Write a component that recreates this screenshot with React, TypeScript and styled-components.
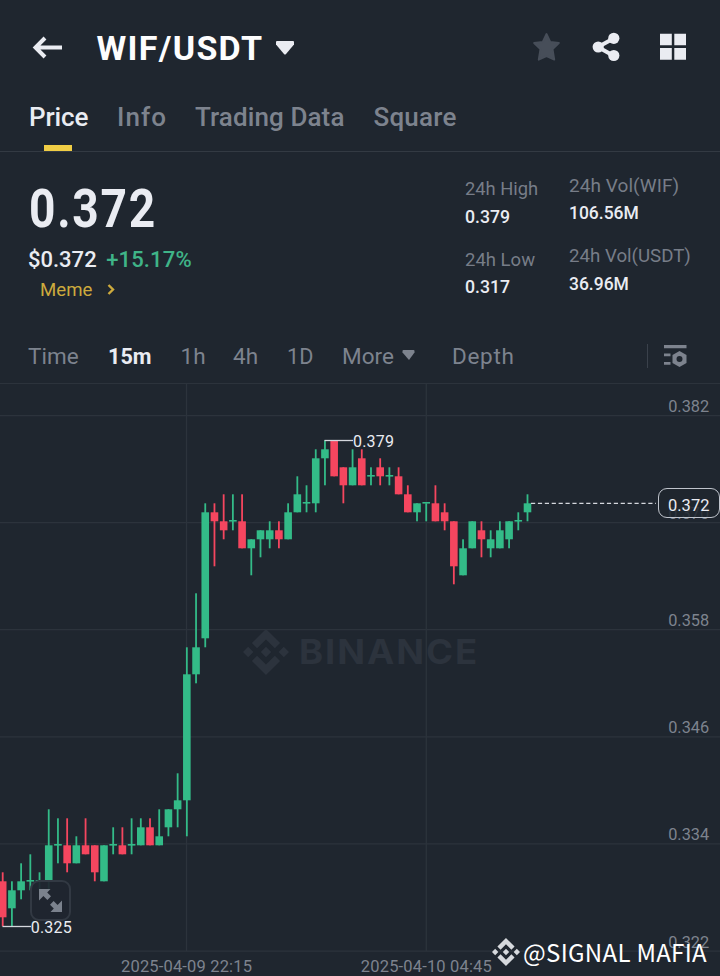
import React from 'react';
import styled, { createGlobalStyle } from 'styled-components';

const color = {
  bg: '#1f262f',
  line: '#2c333c',
  text: '#eaecf2',
  muted: '#7d838e',
  up: '#33bb88',
  down: '#f5465f',
  gold: '#f0cd45',
};

const GlobalStyle = createGlobalStyle`
  * { box-sizing: border-box; }
  body { margin: 0; background: ${color.bg}; font-family: Roboto, "Liberation Sans", sans-serif; }
`;

const Screen = styled.main`
  display: flex;
  flex-direction: column;
  width: 720px;
  height: 976px;
  overflow: hidden;
  background: ${color.bg};
  color: ${color.text};
`;

const Icon = styled.svg`
  display: block;
  flex: none;
`;

/* Label whose tracking and glyph width can be tuned without changing the flow. */
const Label = styled.span<{ $ls?: number; $sx?: number }>`
  display: inline-block;
  white-space: pre;
  letter-spacing: ${(p) => p.$ls ?? 0}px;
  transform: scaleX(${(p) => p.$sx ?? 1});
  transform-origin: left center;
`;

const Header = styled.header`
  display: flex;
  align-items: center;
  height: 95px;
  padding: 0 33px 0 32px;
`;

const PairButton = styled.h1`
  display: flex;
  align-items: center;
  gap: 13px;
  margin: 1px 0 0 33.5px;
  font-size: 34px;
  font-weight: 700;
  line-height: 40px;
  color: #fdfdfe;
`;

const Actions = styled.div`
  display: flex;
  align-items: center;
  gap: 30px;
  margin: -1px 0 0 auto;
`;

const TabBar = styled.nav`
  display: flex;
  height: 57px;
  padding: 1px 0 14px 29px;
  border-bottom: 1px solid #333a43;
`;

const Tab = styled.a<{ $active?: boolean; $width: number }>`
  position: relative;
  width: ${(p) => p.$width}px;
  font-size: 26px;
  font-weight: 500;
  line-height: 42px;
  color: ${(p) => (p.$active ? color.text : color.muted)};
  &::after {
    content: '';
    display: ${(p) => (p.$active ? 'block' : 'none')};
    position: absolute;
    left: 15px;
    top: 49px;
    width: 28px;
    height: 6px;
    background: ${color.gold};
  }
`;

const Ticker = styled.section`
  display: flex;
  height: 176px;
  padding-left: 29px;
`;

const PriceColumn = styled.div`
  width: 436px;
  padding-top: 27px;
`;

const LastPrice = styled.div`
  font-size: 53px;
  font-weight: 700;
  line-height: 60px;
`;

const FiatRow = styled.div`
  display: flex;
  gap: 9.5px;
  margin: 8px 0 0 -1px;
  font-size: 22px;
  font-weight: 500;
  line-height: 26px;
`;

const Change = styled.span`
  letter-spacing: 0.15px;
  color: #3fb488;
`;

const Category = styled.a`
  display: flex;
  align-items: center;
  gap: 13px;
  margin: 4px 0 0 11px;
  font-size: 19px;
  line-height: 26px;
  color: #cdaa3d;
`;

const StatColumn = styled.dl<{ $top: number; $width: number }>`
  display: flex;
  flex-direction: column;
  gap: 15px;
  width: ${(p) => p.$width}px;
  margin: 0;
  padding-top: ${(p) => p.$top}px;
  font-size: 19px;
  line-height: 28px;
`;

const Stat = styled.div`
  height: 55.5px;
`;

const StatName = styled.dt`
  height: 27.5px;
  color: #777d88;
`;

const StatValue = styled.dd`
  margin: 0;
  font-weight: 500;
`;

const IntervalBar = styled.nav`
  display: flex;
  align-items: center;
  height: 56px;
  padding-left: 28px;
  border-bottom: 1px solid ${color.line};
`;

const Interval = styled.a<{ $active?: boolean; $width: number }>`
  display: flex;
  align-items: center;
  width: ${(p) => p.$width}px;
  font-size: 22.5px;
  font-weight: ${(p) => (p.$active ? 700 : 400)};
  line-height: 28px;
  color: ${(p) => (p.$active ? color.text : color.muted)};
`;

const Divider = styled.span`
  width: 1px;
  height: 24px;
  background: #3a414b;
`;

const ChartPanel = styled.section`
  position: relative;
  width: 720px;
  height: 592px;
`;

const ChartSvg = styled.svg`
  display: block;
`;

const CandleLayer = styled.svg`
  position: absolute;
  left: 0;
  top: 0;
`;

const PriceTag = styled.div`
  position: absolute;
  left: 658px;
  top: 104px;
  width: 61.5px;
  height: 30px;
  padding-left: 9px;
  border: 1.5px solid #bfc4cc;
  border-radius: 9px;
  background: rgba(31, 38, 47, 0.86);
  font-size: 17px;
  line-height: 33px;
`;

const ExpandButton = styled.button`
  position: absolute;
  left: 30px;
  top: 496px;
  display: grid;
  place-items: center;
  width: 41px;
  height: 41px;
  padding: 0;
  border: 2px solid #323943;
  border-radius: 9px;
  background: rgba(31, 38, 47, 0.93);
`;

const Brand = styled.div`
  position: absolute;
  left: 243px;
  top: 245px;
  display: flex;
  align-items: center;
  gap: 9.5px;
  height: 46px;
  color: #2c333d;
  font-family: Inter, sans-serif;
  font-size: 34.5px;
  font-weight: 700;
  line-height: 48px;
`;

const Signature = styled.div`
  position: absolute;
  left: 492px;
  top: 549.5px;
  display: flex;
  align-items: center;
  gap: 3px;
  height: 36px;
  color: #fff;
  font-family: "Noto Sans CJK SC", "Noto Sans", sans-serif;
  font-size: 24px;
  font-weight: 400;
  line-height: 35px;
`;

const BINANCE_MARK =
  'M16.624 13.9202l2.7175 2.7154-7.353 7.353-7.353-7.352 2.7175-2.7164 4.6355 4.6595 4.6356-4.6595zm4.6366-4.6366L24 12l-2.7154 2.7164L18.5682 12l2.6924-2.7164zm-9.272.001l2.7163 2.6914-2.7164 2.7174v-.001L9.2721 12l2.7164-2.7154zm-9.2722-.001L5.4088 12l-2.6914 2.6924L0 12l2.7164-2.7164zM11.9885.0115l7.353 7.329-2.7174 2.7154-4.6356-4.6356-4.6355 4.6595-2.7174-2.7154 7.353-7.353z';

const BinanceMark = ({ size, fill }: { size: number; fill: string }) => (
  <Icon width={size} height={size} viewBox="0 0 24 24">
    <path d={BINANCE_MARK} fill={fill} />
  </Icon>
);

const Caret = ({ width, height, fill }: { width: number; height: number; fill: string }) => (
  <Icon width={width} height={height} viewBox="0 0 18 14">
    <path d="M1 0h16q1 0 1 1v2.5L9.8 13.2q-.8.8-1.6 0L0 3.5V1q0-1 1-1z" fill={fill} />
  </Icon>
);

/* Candles in ticks of 0.001 below the 0.379 high: [rising, high, body top, body bottom, low] */
type Candle = [boolean, number, number, number, number];
const U = true;
const D = false;
const candles: Candle[] = [
  [D, 48, 49, 53, 54], [U, 49, 50, 52, 54], [U, 47, 49, 50, 51], [U, 46, 49, 49, 50], [U, 48, 49, 49, 50],
  [U, 41, 45, 49, 50], [U, 42, 45, 45, 47], [D, 42, 45, 47, 48], [U, 44, 45, 47, 47], [D, 42, 45, 46, 46],
  [D, 45, 45, 48, 49], [U, 45, 45, 49, 49], [U, 43, 45, 45, 46], [D, 43, 45, 46, 46], [U, 42, 45, 45, 46],
  [U, 42, 43, 45, 45], [D, 42, 43, 45, 45], [U, 41, 44, 45, 45], [U, 41, 41, 43, 44], [U, 37, 40, 41, 43],
  [U, 23, 26, 40, 44], [U, 17, 23, 26, 27], [U, 7, 8, 22, 23], [D, 7, 8, 9, 14], [D, 6, 9, 10, 11],
  [U, 6, 9, 9, 10], [D, 6, 9, 12, 12], [U, 11, 11, 12, 15], [U, 10, 10, 11, 13], [U, 9, 10, 11, 12],
  [D, 9, 10, 11, 12], [U, 7, 8, 11, 11], [U, 4, 6, 8, 8], [U, 5, 7, 7, 8], [U, 1, 2, 7, 8],
  [U, 0, 1, 2, 5], [D, 0, 0, 4, 4], [D, 3, 3, 5, 7], [U, 1, 3, 5, 5], [D, 1, 2, 5, 5],
  [U, 3, 4, 4, 5], [D, 2, 3, 4, 5], [U, 3, 4, 4, 5], [D, 3, 4, 6, 6], [D, 5, 6, 8, 8],
  [U, 7, 7, 8, 9], [U, 7, 7, 7, 9], [D, 5, 7, 9, 9], [D, 7, 8, 9, 10], [D, 9, 9, 14, 16],
  [U, 11, 12, 15, 15], [U, 9, 9, 12, 12], [D, 9, 10, 11, 13], [U, 10, 11, 12, 13], [U, 9, 10, 12, 12],
  [U, 9, 9, 11, 12], [U, 8, 9, 9, 10], [U, 6, 7, 8, 9],
];

const STEP = 9.207;
const levelY = (n: number) => 56.3 + n * 9;

const CandleShape = ({ candle, index }: { candle: Candle; index: number }) => {
  const [rising, high, top, bottom, low] = candle;
  const x = 2.7 + index * STEP;
  const doji = top === bottom;
  return (
    <g fill={rising ? color.up : color.down}>
      <rect x={x - 0.9} y={levelY(high)} width={1.8} height={(low - high) * 9} />
      <rect x={x - 3.8} y={doji ? levelY(top) - 1.3 : levelY(top)} width={7.6} height={doji ? 1.6 : (bottom - top) * 9} />
    </g>
  );
};

const priceLevels = [
  ['0.382', 31.7], ['0.370', 138.7], ['0.358', 245.7], ['0.346', 352.9], ['0.334', 459.9], ['0.322', 567.2],
] as const;

const timeMarks = [
  ['2025-04-09 22:15', 186.5], ['2025-04-10 04:45', 426.3],
] as const;

const Grid = () => (
  <ChartSvg width="720" height="592" viewBox="0 0 720 592">
    <g stroke={color.line} strokeWidth="1.3">
      {priceLevels.map(([p, y]) => <line key={p} x1="0" x2="720" y1={y} y2={y} />)}
      {timeMarks.map(([t, x]) => <line key={t} x1={x} x2={x} y1="0" y2="567" />)}
    </g>
    <g fill={color.muted} fontSize="16.5">
      {priceLevels.map(([p, y]) => (
        <text key={p} x="668.2" y={y - 3.6} textLength="41" lengthAdjust="spacingAndGlyphs">{p}</text>
      ))}
      {timeMarks.map(([t, x]) => (
        <text key={t} x={x - 65.5} y="588" textLength="131">{t}</text>
      ))}
    </g>
  </ChartSvg>
);

const Candles = () => (
  <CandleLayer width="720" height="592" viewBox="0 0 720 592">
    {candles.map((c, i) => <CandleShape key={i} candle={c} index={i} />)}
    <g stroke="#d5d8de" strokeWidth="1.3">
      <line x1="324.5" x2="353" y1="56.5" y2="56.5" />
      <line x1="2.5" x2="31" y1="542.5" y2="542.5" />
      <line x1="531" x2="656" y1="119.4" y2="119.4" strokeDasharray="4.2 2.7" />
    </g>
    <g fill={color.text} fontSize="16">
      <text x="353" y="63" textLength="41">0.379</text>
      <text x="30.7" y="549" textLength="41">0.325</text>
    </g>
  </CandleLayer>
);

const tabs: [string, number, number][] = [
  ['Price', 88, -0.1], ['Info', 78, 1.1], ['Trading Data', 178.5, 0.1], ['Square', 90, 0.2],
];

export default function App() {
  return (
    <Screen>
      <GlobalStyle />
      <Header>
        <Icon width="31" height="24" viewBox="0 0 31 24">
          <path d="M13 2L3.5 11.5 13 21M3.5 11.5H30" fill="none" stroke={color.text} strokeWidth="4" />
        </Icon>
        <PairButton>
          <Label $ls={1.3}>WIF/USDT</Label>
          <Caret width={18} height={14} fill={color.text} />
        </PairButton>
        <Actions>
          <Icon width="30" height="32" viewBox="0 0 30 32">
            <path
              d="M15.5 3l3.8 8 8.6 1-6.3 6.2 1.7 10.5-7.8-3.6-7.8 3.6L9.4 18.2 3.1 12l8.6-1z"
              fill="#474e59" stroke="#474e59" strokeWidth="1.8" strokeLinejoin="round"
            />
          </Icon>
          <Icon width="30" height="32" viewBox="0 0 30 32">
            <path d="M22.5 7.5L7 16l15.5 8.8" fill="none" stroke={color.text} strokeWidth="4" />
            <g fill={color.text}>
              <circle cx="7.2" cy="16" r="5.6" />
              <circle cx="22.8" cy="7.3" r="5.6" />
              <circle cx="22.8" cy="24.5" r="5.6" />
            </g>
          </Icon>
          <Icon width="36" height="32" viewBox="0 0 36 32">
            <path d="M9 2.8h11.8v11.5H9zM23.3 2.8H35v11.5H23.3zM9 17h11.8v11.7H9zM23.3 17H35v11.7H23.3z" fill={color.text} />
          </Icon>
        </Actions>
      </Header>

      <TabBar>
        {tabs.map(([name, width, ls], i) => (
          <Tab key={name} $active={i === 0} $width={width}><Label $ls={ls}>{name}</Label></Tab>
        ))}
      </TabBar>

      <Ticker>
        <PriceColumn>
          <LastPrice><Label $ls={2} $sx={0.87}>0.372</Label></LastPrice>
          <FiatRow>
            <Label>$0.372</Label>
            <Change>+15.17%</Change>
          </FiatRow>
          <Category>
            <Label $sx={0.98}>Meme</Label>
            <Icon width="10" height="14" viewBox="0 0 10 14">
              <path d="M2.5 2L7 6.5 2.5 11" fill="none" stroke="#cdaa3d" strokeWidth="2.4" />
            </Icon>
          </Category>
        </PriceColumn>
        <StatColumn $top={23} $width={104}>
          <Stat><StatName><Label $sx={0.965}>24h High</Label></StatName><StatValue><Label $sx={0.93}>0.379</Label></StatValue></Stat>
          <Stat><StatName><Label $sx={0.975}>24h Low</Label></StatName><StatValue><Label $sx={0.93}>0.317</Label></StatValue></Stat>
        </StatColumn>
        <StatColumn $top={19.5} $width={150}>
          <Stat><StatName><Label $ls={0.06}>24h Vol(WIF)</Label></StatName><StatValue><Label $sx={0.92}>106.56M</Label></StatValue></Stat>
          <Stat><StatName><Label $sx={0.983}>24h Vol(USDT)</Label></StatName><StatValue><Label $sx={0.92}>36.96M</Label></StatValue></Stat>
        </StatColumn>
      </Ticker>

      <IntervalBar>
        <Interval $width={80}>Time</Interval>
        <Interval $width={72.5} $active><Label $sx={0.96}>15m</Label></Interval>
        <Interval $width={52.5}>1h</Interval>
        <Interval $width={53.5}>4h</Interval>
        <Interval $width={55.5}><Label $sx={0.96}>1D</Label></Interval>
        <Interval $width={110}>
          <Label $ls={0.04}>More</Label>
          <Icon width="21" height="16" viewBox="0 0 21 16">
            <path d="M9.5 2h10q1 0 1 1v1.500L15 12 8.500 4.500V3q0-1 1-1z" fill={color.muted} />
          </Icon>
        </Interval>
        <Interval $width={195}><Label $ls={0.7}>Depth</Label></Interval>
        <Divider />
        <Icon width="40" height="26" viewBox="0 0 40 26">
          <g fill={color.muted}>
            <path d="M16 2h22.5v3.3H16zM16 10.500h6.500v2.800H16zM16 19h6.500v2.800H16z" />
            <path fillRule="evenodd" d="M31.500 8l7 4v8l-7 4-7-4v-8zM31.500 13a3 3 0 1 0 0 6 3 3 0 0 0 0-6z" />
          </g>
        </Icon>
      </IntervalBar>

      <ChartPanel>
        <Grid />
        <Brand>
          <BinanceMark size={46} fill="#2c333d" />
          <Label $ls={1.8} $sx={1.06}>BINANCE</Label>
        </Brand>
        <Candles />
        <PriceTag><Label $sx={0.97}>0.372</Label></PriceTag>
        <ExpandButton aria-label="Expand chart">
          <Icon width="27" height="27" viewBox="0 0 27 27">
            <g fill="#7b828d">
              <path d="M2 2h11.500l-3.300 3.500 3.800 3.800-3.600 3.600-4-3.900L2 13.500z" />
              <path d="M25 25H13.500l3.300-3.500-3.800-3.800 3.600-3.600 4 3.900 4.400-4.500z" />
            </g>
          </Icon>
        </ExpandButton>
        <Signature>
          <BinanceMark size={28} fill="#d6d9dd" />
          <Label $ls={0.31}>@SIGNAL MAFIA</Label>
        </Signature>
      </ChartPanel>
    </Screen>
  );
}
